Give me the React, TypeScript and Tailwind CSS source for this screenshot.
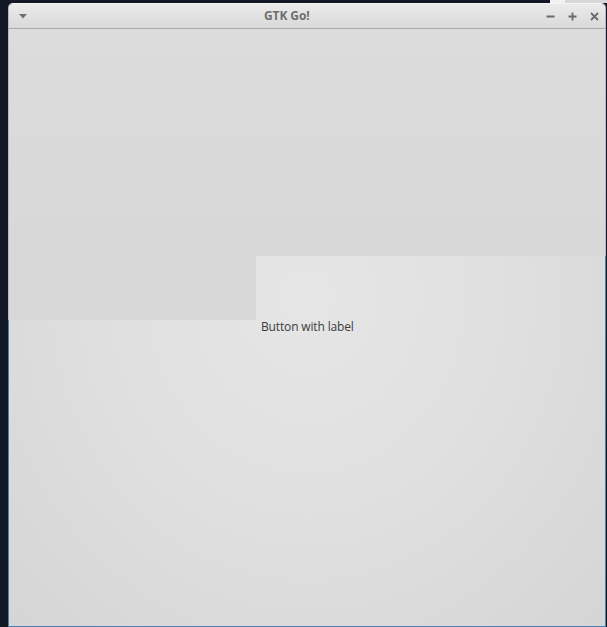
export default function App() {
  return (
    <div className="w-[607px] h-[627px] bg-[#121826] overflow-hidden relative" style={{ fontFamily: '"Open Sans", "Noto Sans", sans-serif' }}>
      {/* window behind, top right */}
      <div className="absolute top-0 left-[550px] w-[57px] h-[3px] bg-[#d8d8d8]" />
      <div className="absolute top-0 left-[550px] w-[15px] h-[3px] bg-[#f2f2f2]" />

      <div className="relative ml-[8px] mt-[3px] w-[598px] h-[624px] flex flex-col rounded-t-[5px] overflow-hidden border-t border-[#f4f4f4]">
        {/* Title bar */}
        <div className="h-[25px] shrink-0 flex items-center bg-gradient-to-b from-[#ebebeb] to-[#d9d9d9] border-b border-[#a9a9a9] border-l border-r border-l-[#b8b8b8] border-r-[#b8b8b8]">
          <svg width="8" height="5" viewBox="0 0 8 5" className="ml-[10px] shrink-0">
            <path d="M0 0 L8 0 L4 4.5 Z" fill="#6f6f6f" />
          </svg>
          <div className="ml-[237px] text-[12px] font-bold text-[#6e6e6e] leading-none tracking-[-0.1px]">GTK Go!</div>
          <div className="flex-1" />
          <svg width="9" height="9" viewBox="0 0 9 9" className="shrink-0">
            <path d="M0.5 4.5 H8.5" stroke="#6a6a6a" strokeWidth="1.8" />
          </svg>
          <svg width="9" height="9" viewBox="0 0 9 9" className="ml-[13px] shrink-0">
            <path d="M0.5 4.5 H8.5 M4.5 0.5 V8.5" stroke="#6a6a6a" strokeWidth="1.8" />
          </svg>
          <svg width="9" height="9" viewBox="0 0 9 9" className="ml-[13px] mr-[6px] shrink-0">
            <path d="M1 1 L8 8 M8 1 L1 8" stroke="#6a6a6a" strokeWidth="1.8" />
          </svg>
        </div>

        {/* Content */}
        <div className="flex-1 flex flex-col bg-[radial-gradient(ellipse_at_50%_45%,#e6e6e6_0%,#e0e0e0_45%,#d5d5d5_100%)]">
          <div className="h-[227px] shrink-0 bg-gradient-to-b from-[#dcdcdc] to-[#d8d8d8] border-l border-r border-[#b9b9b9]" />
          <div className="h-[64px] shrink-0 flex">
            <div className="w-[248px] bg-[#d8d8d8] border-l border-[#b9b9b9]" />
            <div className="flex-1 border-r border-[#4f7fae]" />
          </div>
          <div className="flex-1 border-l border-r border-b border-[#4f7fae] pl-[252px]">
            <div className="text-[12px] leading-[14px] text-[#3c3c3c] tracking-[-0.15px]">Button with label</div>
          </div>
        </div>
      </div>
    </div>
  );
}
